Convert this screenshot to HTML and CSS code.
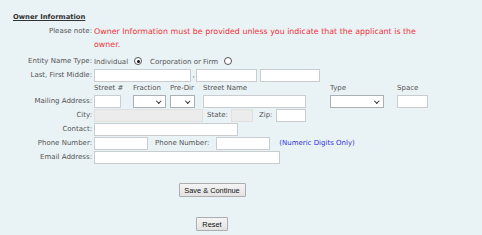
FILE: index.html
```html
<!DOCTYPE html>
<html>
<head>
<meta charset="utf-8">
<link rel="stylesheet" href="styles.css">
</head>
<body>
<div class="page">
  <div class="section-title">Owner Information</div>
  <div class="row note-row">
    <div class="label note-label">Please note:</div>
    <div class="note">Owner Information must be provided unless you indicate that the applicant is the owner.</div>
  </div>
  <div class="row entity-row">
    <div class="label">Entity Name Type:</div>
    <div class="field">
      <span class="opt">Individual</span><span class="radio checked"></span>
      <span class="opt opt2">Corporation or Firm</span><span class="radio"></span>
    </div>
  </div>
  <div class="row">
    <div class="label">Last, First Middle:</div>
    <div class="field">
      <span class="input w-last"></span><span class="comma">,</span><span class="input w-first"></span><span class="input w-mid"></span>
    </div>
  </div>
  <div class="row head-row">
    <div class="label"></div>
    <div class="field">
      <span class="col c-num">Street #</span><span class="col c-frac">Fraction</span><span class="col c-dir">Pre-Dir</span><span class="col c-name">Street Name</span><span class="col c-type">Type</span><span class="col c-space">Space</span>
    </div>
  </div>
  <div class="row">
    <div class="label">Mailing Address:</div>
    <div class="field">
      <span class="input w-num"></span><span class="select w-frac"><i class="chev"></i></span><span class="select w-dir"><i class="chev"></i></span><span class="input w-name"></span><span class="select w-type"><i class="chev"></i></span><span class="input w-space"></span>
    </div>
  </div>
  <div class="row">
    <div class="label">City:</div>
    <div class="field">
      <span class="input disabled w-city"></span><span class="inl-label state-l">State:</span><span class="input disabled w-state"></span><span class="inl-label zip-l">Zip:</span><span class="input w-zip"></span>
    </div>
  </div>
  <div class="row">
    <div class="label">Contact:</div>
    <div class="field"><span class="input w-contact"></span></div>
  </div>
  <div class="row">
    <div class="label">Phone Number:</div>
    <div class="field">
      <span class="input w-phone"></span><span class="inl-label phone-l">Phone Number:</span><span class="input w-phone"></span><span class="hint">(Numeric Digits Only)</span>
    </div>
  </div>
  <div class="row">
    <div class="label">Email Address:</div>
    <div class="field"><span class="input w-email"></span></div>
  </div>
  <div class="buttons">
    <button class="btn save">Save &amp; Continue</button>
    <button class="btn reset">Reset</button>
  </div>
</div>
</body>
</html>
```
FILE: styles.css
```css
html, body {
  margin: 0;
  padding: 0;
  background: #e9f2f4;
}
.page {
  width: 482px;
  height: 235px;
  font-family: "DejaVu Sans", Verdana, sans-serif;
  font-size: 7px;
  color: #555;
  padding-top: 13px;
  box-sizing: border-box;
}
.section-title {
  margin-left: 13px;
  font-weight: bold;
  font-size: 6.8px;
  text-decoration: underline;
  color: #333;
  height: 9px;
  line-height: 9px;
}
.row {
  display: flex;
  align-items: center;
  height: 14px;
}
.label {
  width: 92px;
  flex: none;
  text-align: right;
  white-space: nowrap;
}
.field {
  display: flex;
  align-items: center;
  margin-left: 2px;
  white-space: nowrap;
}
.note-row {
  align-items: flex-start;
  height: auto;
  margin-top: 3px;
}
.note-label {
  padding-top: 2px;
}
.note {
  margin-left: 2px;
  width: 326px;
  color: #f0343c;
  font-size: 7.9px;
  line-height: 13px;
}
.entity-row {
  margin-top: 3px;
}
.opt {
  margin-top: 2px;
}
.opt2 { margin-left: 8px; }
.radio {
  width: 8px;
  height: 8px;
  border: 1px solid #555;
  border-radius: 50%;
  background: #fff;
  margin-left: 6px;
  position: relative;
  box-sizing: border-box;
}
.radio.checked::after {
  content: "";
  position: absolute;
  left: 1.5px;
  top: 1.5px;
  width: 3px;
  height: 3px;
  border-radius: 50%;
  background: #111;
}
.input, .select {
  display: inline-block;
  height: 13px;
  box-sizing: border-box;
  background: #fff;
  border: 1px solid #c9cdd0;
  flex: none;
}
.select {
  position: relative;
  border-color: #aab0b4;
}
.chev {
  position: absolute;
  right: 5px;
  top: 3px;
  width: 2.5px;
  height: 2.5px;
  border-right: 1px solid #333;
  border-bottom: 1px solid #333;
  transform: rotate(45deg);
}
.disabled {
  background: #ececec;
  border-color: #e0e0e0;
}
.comma { width: 5px; text-align: center; color: #555; }
.w-last { width: 97px; }
.w-first { width: 61px; }
.w-mid { width: 60px; margin-left: 3px; }
.head-row { height: 12px; }
.col { display: inline-block; }
.c-num { width: 39px; }
.c-frac { width: 37px; }
.c-dir { width: 33px; }
.c-name { width: 127px; }
.c-type { width: 67px; }
.w-num { width: 27px; margin-right: 12px; }
.w-frac { width: 33px; margin-right: 4px; }
.w-dir { width: 25px; margin-right: 8px; }
.w-name { width: 103px; margin-right: 24px; }
.w-type { width: 54px; margin-right: 13px; }
.w-space { width: 31px; }
.w-city { width: 109px; }
.inl-label { display: inline-block; }
.state-l { margin-left: 4px; margin-right: 3px; }
.w-state { width: 22px; }
.zip-l { margin-left: 6px; margin-right: 4px; }
.w-zip { width: 30px; }
.w-contact { width: 144px; }
.w-phone { width: 54px; }
.phone-l { margin-left: 7px; margin-right: 7px; }
.hint { color: #3333dd; margin-left: 9px; }
.w-email { width: 186px; }
.buttons {
  width: 424px;
  display: flex;
  flex-direction: column;
  align-items: center;
  margin-top: 19px;
}
.btn {
  font-family: "Liberation Sans", Arial, sans-serif;
  font-size: 7.4px;
  color: #111;
  background: linear-gradient(#f4f4f4, #e2e2e2);
  border: 1px solid #adadad;
  border-radius: 1px;
  height: 14px;
  padding: 0;
  box-sizing: border-box;
  margin: 0;
  white-space: nowrap;
}
.save { width: 67px; }
.reset { width: 32px; margin-top: 20px; }
```
